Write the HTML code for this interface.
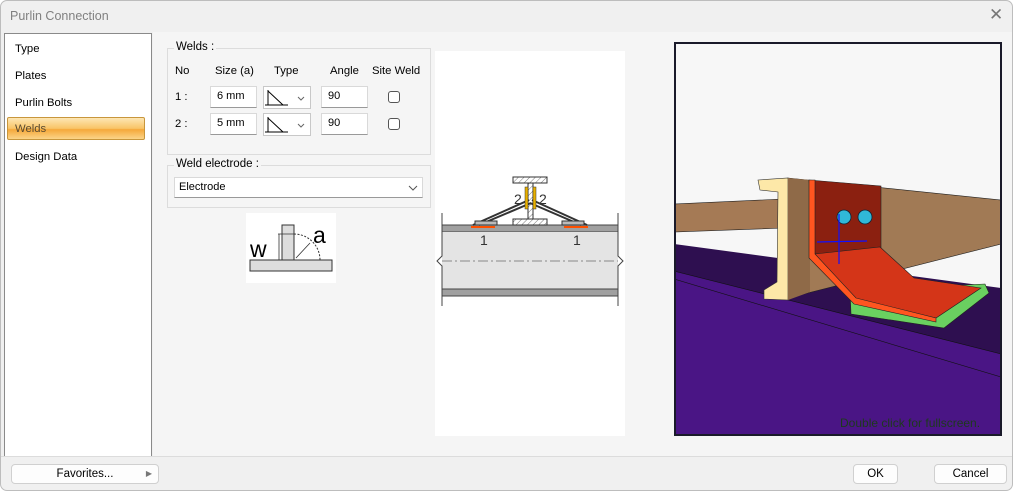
<!DOCTYPE html>
<html><head><meta charset="utf-8"><style>
body{margin:0;width:1013px;height:491px;overflow:hidden;background:#fff;font-family:"Liberation Sans",sans-serif;font-size:12px;color:#000}
.win{position:absolute;left:0;top:0;width:1011px;height:489px;border:1px solid #bdbdbd;border-radius:7px;background:#f0f0f0;overflow:hidden}
.a{position:absolute}
.t{font-size:11.3px}
.inp{position:absolute;background:#fff;border:1px solid #d9d9d9;border-bottom-color:#999;box-sizing:border-box;padding:3px 0 0 6px;font-size:11px}
.grp{position:absolute;border:1px solid #dcdcdc;box-sizing:border-box}
.lg{position:absolute;top:-8px;left:6px;background:#f5f5f5;padding:0 2px;font-size:11.5px}
.btn{position:absolute;background:#fdfdfd;border:1px solid #d0d0d0;border-radius:4px;box-sizing:border-box;text-align:center;font-size:11.5px;line-height:18px}
.cb{position:absolute;width:12px;height:12px;border:1px solid #555;border-radius:3px;box-sizing:border-box;background:#fff}
</style></head><body><div class="win">
<div class="a" style="left:9px;top:8px;color:#808080;font-size:12.5px">Purlin Connection</div>
<div class="a" style="left:988px;top:4px;color:#777;font-size:17px">✕</div>
<div class="a" style="left:152px;top:31px;width:859px;height:424px;background:#f5f5f5"></div>
<div class="a" style="left:3px;top:32px;width:146px;height:422px;background:#fff;border:1px solid #8a8a8a"></div>
<div class="a t" style="left:14px;top:42px">Type</div>
<div class="a t" style="left:14px;top:69px">Plates</div>
<div class="a t" style="left:14px;top:96px">Purlin Bolts</div>
<div class="a" style="left:6px;top:116px;width:138px;height:23px;border:1px solid #c8963c;box-sizing:border-box;background:linear-gradient(#fde6b4,#f9c466 50%,#f5a83a 55%,#fbd488);border-radius:2px"></div>
<div class="a t" style="left:14px;top:122px;color:#5a4a30">Welds</div>
<div class="a t" style="left:14px;top:150px">Design Data</div>

<div class="grp" style="left:166px;top:47px;width:264px;height:107px"><span class="lg">Welds :</span></div>
<div class="a t" style="left:174px;top:64px">No</div>
<div class="a t" style="left:214px;top:64px">Size (a)</div>
<div class="a t" style="left:273px;top:64px">Type</div>
<div class="a t" style="left:329px;top:64px">Angle</div>
<div class="a t" style="left:371px;top:64px">Site Weld</div>
<div class="a t" style="left:174px;top:90px">1 :</div>
<div class="a t" style="left:174px;top:117px">2 :</div>
<div class="inp" style="left:209px;top:85px;width:47px;height:22px">6 mm</div>
<div class="inp" style="left:209px;top:112px;width:47px;height:22px">5 mm</div>
<div class="inp" style="left:320px;top:85px;width:47px;height:22px">90</div>
<div class="inp" style="left:320px;top:112px;width:47px;height:22px">90</div>
<svg class="a" style="left:262px;top:85px" width="48" height="50"><g fill="#fff" stroke="#c8c8c8"><rect x="0.5" y="0.5" width="47" height="22"/><rect x="0.5" y="27.5" width="47" height="22"/></g><g fill="none" stroke="#000"><path d="M5 4V19H24M5 19V5L20 19M2 19H25"/><path d="M5 31V46H24M5 46V32L20 46M2 46H25"/></g><g fill="none" stroke="#666"><path d="M35 11l3 3 3-3M35 38l3 3 3-3"/></g></svg>
<div class="cb" style="left:387px;top:90px"></div>
<div class="cb" style="left:387px;top:117px"></div>

<div class="grp" style="left:166px;top:164px;width:264px;height:43px"><span class="lg">Weld electrode :</span></div>
<div class="inp" style="left:173px;top:176px;width:249px;height:21px;padding-left:4px">Electrode</div>
<svg class="a" style="left:407px;top:183px" width="10" height="8"><path d="M1 2l4 4 4-4" fill="none" stroke="#555"/></svg>

<svg class="a" style="left:245px;top:212px" width="90" height="70"><rect width="90" height="70" fill="#fff"/><rect x="4" y="47" width="82" height="11" fill="#ddd" stroke="#333"/><rect x="36" y="12" width="12" height="35" fill="#ddd" stroke="#333"/><path d="M48 21A26 26 0 0 1 74 47" fill="none" stroke="#333" stroke-dasharray="2 1.5"/><path d="M48 21H32M48 47H32M33 21V47M50 45L64 30" fill="none" stroke="#333" stroke-width=".8"/><text x="4" y="44" font-size="23" font-family="Liberation Sans">w</text><text x="67" y="30" font-size="23" font-family="Liberation Sans">a</text></svg>

<svg class="a" style="left:434px;top:50px" width="190" height="385"><rect width="190" height="385" fill="#fff"/>
<defs><pattern id="h" width="4" height="4" patternUnits="userSpaceOnUse" patternTransform="rotate(45)"><path d="M0 0V4" stroke="#777" stroke-width="1"/></pattern></defs>
<rect x="7" y="174" width="176" height="7" fill="#a0a0a0" stroke="#444"/>
<rect x="7" y="181" width="176" height="57" fill="#e4e4e4"/>
<rect x="7" y="238" width="176" height="7" fill="#a0a0a0" stroke="#444"/>
<path d="M7 162V205l-5 5 5 5V255M183 162V205l5 5-5 5V255" fill="none" stroke="#444"/>
<path d="M7 210H183" stroke="#888" stroke-dasharray="10 3 2 3"/>
<rect x="78" y="126" width="34" height="6" fill="url(#h)" stroke="#333"/>
<rect x="78" y="168" width="34" height="6" fill="url(#h)" stroke="#333"/>
<rect x="93" y="132" width="5" height="36" fill="url(#h)" stroke="#333"/>
<path d="M38 174L94 149M44 174L96 152M152 174L97 149M146 174L95 152" stroke="#333" stroke-width="2"/>
<rect x="40" y="170" width="22" height="4" fill="#bbb" stroke="#333"/><rect x="127" y="170" width="22" height="4" fill="#bbb" stroke="#333"/>
<rect x="90" y="136" width="3" height="22" fill="#e8b000" stroke="#333" stroke-width=".5"/><rect x="98" y="136" width="3" height="22" fill="#e8b000" stroke="#333" stroke-width=".5"/>
<rect x="36" y="175" width="24" height="2" fill="#ff5000"/><rect x="129" y="175" width="24" height="2" fill="#ff5000"/>
<text x="79" y="153" font-size="14" fill="#333">2</text><text x="104" y="153" font-size="14" fill="#333">2</text>
<text x="45" y="194" font-size="14" fill="#333">1</text><text x="138" y="194" font-size="14" fill="#333">1</text></svg>

<svg class="a" style="left:673px;top:41px" width="328" height="394"><rect x="1" y="1" width="326" height="392" fill="#f7f7f7" stroke="#1a1a2a" stroke-width="2"/>
<clipPath id="c"><rect x="2" y="2" width="324" height="390"/></clipPath><g clip-path="url(#c)">
<polygon points="0,162 110,157 110,186 0,190" fill="#a57a55" stroke="#222" stroke-width=".6"/>
<polygon points="0,202 327,246 327,394 0,394" fill="#2e0f50"/>
<polygon points="0,229 327,312 327,394 0,394" fill="#4a1585" stroke="#111" stroke-width=".6"/>
<path d="M0 237L327 335" stroke="#111" stroke-width=".6"/>
<polygon points="114,136 327,158 327,202 114,256" fill="#a17a55" stroke="#222" stroke-width=".6"/>
<polygon points="84,138 114,136 114,258 90,257 90,248 103,240 104,150 86,148" fill="#fde8a8" stroke="#333" stroke-width=".6"/>
<polygon points="114,136 136,138 136,250 114,258" fill="#8f6a48"/>
<polygon points="135,138 207,144 207,210 141,212" fill="#8b2010" stroke="#222" stroke-width=".6"/>
<polygon points="176,248 311,242 315,251 270,286 177,272" fill="#6ad060" stroke="#222" stroke-width=".6"/>
<polygon points="141,212 206,205 240,236 307,246 262,276 182,258" fill="#d43518" stroke="#222" stroke-width=".6"/>
<polygon points="135,138 141,138 141,212 182,256 262,276 262,280 180,262 135,216" fill="#ff5520" stroke="#222" stroke-width=".6"/>
<circle cx="170" cy="175" r="7" fill="#30b8d8" stroke="#123" stroke-width=".8"/><circle cx="191" cy="175" r="7" fill="#30b8d8" stroke="#123" stroke-width=".8"/>
<path d="M165 172V222M143 200L193 199" stroke="#1010ff" stroke-width="1.2"/>
<text x="166" y="385" font-size="12" fill="#1d3a1d" font-family="Liberation Sans">Double click for fullscreen.</text></g></svg>

<div class="a" style="left:0;top:455px;width:1011px;height:1px;background:#dcdcdc"></div>
<div class="btn" style="left:10px;top:463px;width:148px;height:20px">Favorites...<span style="position:absolute;right:6px;color:#777;font-size:8px">▶</span></div>
<div class="btn" style="left:852px;top:463px;width:45px;height:20px">OK</div>
<div class="btn" style="left:933px;top:463px;width:73px;height:20px">Cancel</div>
</div></body></html>
